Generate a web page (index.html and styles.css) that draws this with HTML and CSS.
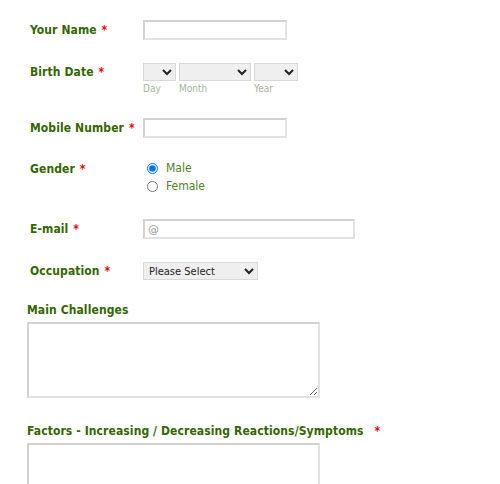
FILE: index.html
```html
<!DOCTYPE html>
<html>
<head>
<meta charset="utf-8">
<link rel="stylesheet" href="styles.css">
</head>
<body>
<form class="form">
  <div class="row row-name">
    <label class="lbl">Your Name <span class="req">*</span></label>
    <input class="txt txt-md" type="text">
  </div>
  <div class="row row-birth">
    <label class="lbl lbl-sel">Birth Date <span class="req">*</span></label>
    <div class="date">
      <div class="date-part">
        <select class="sel sel-day"><option></option></select>
        <span class="sub">Day</span>
      </div>
      <div class="date-part">
        <select class="sel sel-month"><option></option></select>
        <span class="sub">Month</span>
      </div>
      <div class="date-part">
        <select class="sel sel-year"><option></option></select>
        <span class="sub">Year</span>
      </div>
    </div>
  </div>
  <div class="row row-mobile">
    <label class="lbl">Mobile Number <span class="req">*</span></label>
    <input class="txt txt-md" type="text">
  </div>
  <div class="row row-gender">
    <label class="lbl lbl-radio">Gender <span class="req">*</span></label>
    <div class="radios">
      <label class="radio"><input type="radio" name="g" checked> Male</label>
      <label class="radio"><input type="radio" name="g"> Female</label>
    </div>
  </div>
  <div class="row row-email">
    <label class="lbl">E-mail <span class="req">*</span></label>
    <input class="txt txt-lg" type="text" placeholder="@">
  </div>
  <div class="row row-occ">
    <label class="lbl lbl-sel">Occupation <span class="req">*</span></label>
    <select class="sel sel-occ"><option>Please Select</option></select>
  </div>
  <div class="block block-main">
    <label class="lbl-top">Main Challenges</label>
    <textarea class="area"></textarea>
  </div>
  <div class="block block-factors">
    <label class="lbl-top">Factors - Increasing / Decreasing Reactions/Symptoms <span class="req req-gap">*</span></label>
    <textarea class="area"></textarea>
  </div>
</form>
</body>
</html>
```
FILE: styles.css
```css
html, body {
  margin: 0;
  padding: 0;
  background: #fff;
}
body {
  font-family: "DejaVu Sans Condensed", "DejaVu Sans", Verdana, sans-serif;
  font-stretch: condensed;
  font-size: 12px;
  color: #336600;
  overflow: hidden;
  height: 484px;
}
.form {
  padding: 20px 0 0 30px;
}
.row {
  display: flex;
  align-items: flex-start;
}
.lbl {
  width: 113px;
  flex: none;
  font-weight: bold;
  letter-spacing: 0.1px;
  line-height: 20px;
  color: #336600;
}
.lbl-sel {
  line-height: 18px;
}
.lbl-radio {
  line-height: 18px;
  padding-top: 1px;
}
.req {
  color: #ee0000;
  margin-left: 1px;
}
.req-gap {
  margin-left: 7px;
}
.txt {
  box-sizing: border-box;
  height: 20px;
  margin: 0;
  padding: 0 3px;
  border: 2px solid;
  border-color: #d2d2d2 #e2e2e2 #e2e2e2 #d2d2d2;
  font-family: "DejaVu Sans", Verdana, sans-serif;
  font-size: 11px;
  color: #333;
  background: #fff;
  outline: none;
}
.txt::placeholder {
  color: #999;
}
.txt-md {
  width: 144px;
}
.txt-lg {
  width: 212px;
}
.row-birth { margin-top: 23px; }
.row-mobile { margin-top: 23px; }
.row-gender { margin-top: 21px; }
.row-email { margin-top: 24px; }
.row-occ { margin-top: 23px; }

.date {
  display: flex;
  gap: 3px;
}
.date-part {
  display: flex;
  flex-direction: column;
}
.sel {
  box-sizing: border-box;
  height: 18px;
  margin: 0;
  border: 1px solid #d8d8d8;
  border-radius: 0;
  background: #efefef;
  font-family: "DejaVu Sans Condensed", "DejaVu Sans", Verdana, sans-serif;
  font-stretch: condensed;
  font-size: 11px;
  color: #222;
  padding: 0 1px;
}
.sel-day { width: 33px; }
.sel-month { width: 72px; }
.sel-year { width: 44px; }
.sel-occ { width: 115px; }
.sub {
  font-size: 10px;
  color: #a8b29a;
  line-height: 13px;
  margin-top: 1px;
}
.radios {
  display: flex;
  flex-direction: column;
}
.radio {
  display: flex;
  align-items: center;
  height: 18px;
  font-size: 12px;
  color: #4f7f2c;
}
.radio input {
  width: 11px;
  height: 11px;
  margin: 0 8px 0 4px;
}
.block {
  display: flex;
  flex-direction: column;
  align-items: flex-start;
  margin-left: -3px;
}
.block-main { margin-top: 23px; }
.block-factors { margin-top: 26px; }
.lbl-top {
  font-weight: bold;
  letter-spacing: 0.1px;
  line-height: 14px;
  color: #336600;
}
.area {
  box-sizing: border-box;
  width: 293px;
  height: 76px;
  margin: 5px 0 0 0;
  border: 2px solid;
  border-color: #d2d2d2 #e2e2e2 #e2e2e2 #d2d2d2;
  background: #fff;
  outline: none;
}
```
